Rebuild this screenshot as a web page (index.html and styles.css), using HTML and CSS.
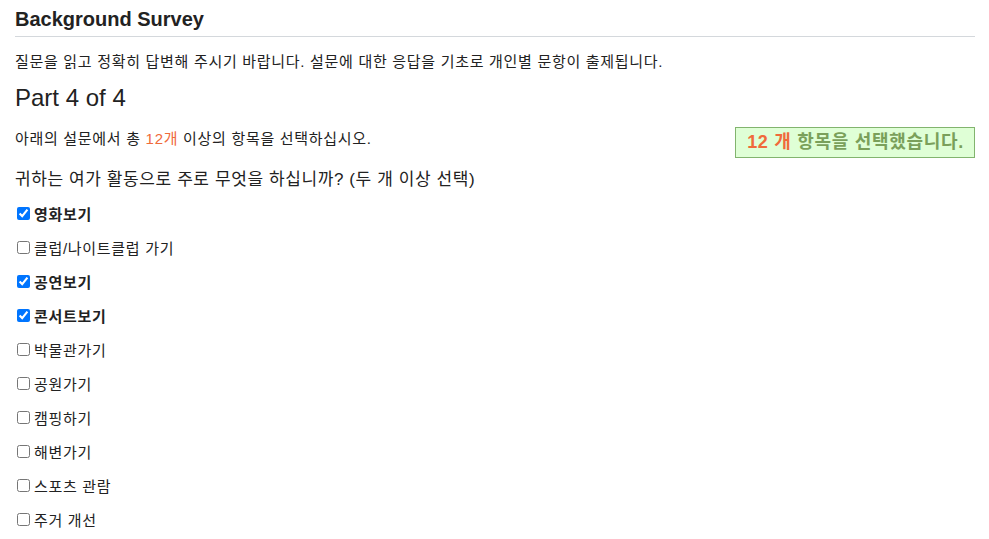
FILE: index.html
```html
<!DOCTYPE html>
<html lang="ko">
<head>
<meta charset="utf-8">
<title>Background Survey</title>
<link rel="stylesheet" href="styles.css">
</head>
<body>
<div class="page">
  <h1 class="title">Background Survey</h1>
  <p class="desc">질문을 읽고 정확히 답변해 주시기 바랍니다. 설문에 대한 응답을 기초로 개인별 문항이 출제됩니다.</p>
  <h2 class="part">Part 4 of 4</h2>
  <div class="inst-row">
    <p class="inst">아래의 설문에서 총 <span class="hl">12개</span> 이상의 항목을 선택하십시오.</p>
    <div class="count"><span class="hl">12 개</span> 항목을 선택했습니다.</div>
  </div>
  <p class="question">귀하는 여가 활동으로 주로 무엇을 하십니까? (두 개 이상 선택)</p>
  <ul class="options">
    <li class="opt checked"><input type="checkbox" checked><span>영화보기</span></li>
    <li class="opt"><input type="checkbox"><span>클럽/나이트클럽 가기</span></li>
    <li class="opt checked"><input type="checkbox" checked><span>공연보기</span></li>
    <li class="opt checked"><input type="checkbox" checked><span>콘서트보기</span></li>
    <li class="opt"><input type="checkbox"><span>박물관가기</span></li>
    <li class="opt"><input type="checkbox"><span>공원가기</span></li>
    <li class="opt"><input type="checkbox"><span>캠핑하기</span></li>
    <li class="opt"><input type="checkbox"><span>해변가기</span></li>
    <li class="opt"><input type="checkbox"><span>스포츠 관람</span></li>
    <li class="opt"><input type="checkbox"><span>주거 개선</span></li>
  </ul>
</div>
</body>
</html>
```
FILE: styles.css
```css
html, body {
  margin: 0;
  padding: 0;
  background: #fff;
}
body {
  font-family: "Liberation Sans", "Noto Sans CJK KR", sans-serif;
  color: #222;
}
.page {
  padding: 0 14px 0 15px;
}
.title {
  margin: 0;
  padding: 7px 0 5px;
  font-size: 20px;
  font-weight: bold;
  line-height: 24px;
  border-bottom: 1px solid #d4d8dc;
  color: #222;
}
.desc {
  margin: 15px 0 0;
  font-size: 15px;
  letter-spacing: 0.7px;
  line-height: 20px;
}
.part {
  margin: 12px 0 0;
  font-size: 24px;
  font-weight: normal;
  line-height: 28px;
}
.inst-row {
  display: flex;
  justify-content: space-between;
  align-items: flex-start;
  margin-top: 10px;
}
.inst {
  margin: 7px 0 0;
  font-size: 15px;
  letter-spacing: 0.7px;
  line-height: 20px;
}
.hl {
  color: #f06a3a;
}
.count {
  background: #dfffd6;
  border: 1px solid #82b46e;
  color: #7aa05a;
  font-size: 18px;
  letter-spacing: 0.7px;
  font-weight: bold;
  line-height: 20px;
  padding: 4px 10px 5px 11px;
  margin-top: 5px;
}
.question {
  margin: 11px 0 0;
  font-size: 17px;
  letter-spacing: 0.6px;
  line-height: 22px;
}
.options {
  list-style: none;
  margin: 5px 0 0;
  padding: 0;
}
.opt {
  display: flex;
  align-items: center;
  height: 34px;
  font-size: 15px;
  letter-spacing: 0.7px;
}
.opt input {
  margin: 0 4px 0 2px;
  width: 13px;
  height: 13px;
}
.opt.checked span {
  font-weight: bold;
}
```
